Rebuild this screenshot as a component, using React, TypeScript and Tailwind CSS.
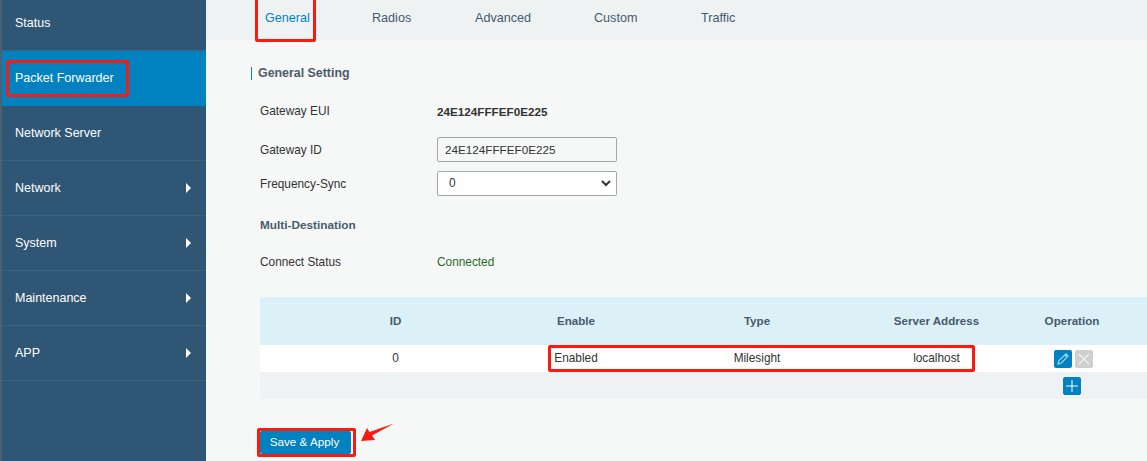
import { Fragment } from 'react';

const navItems = [
  { label: 'Status' },
  { label: 'Packet Forwarder', active: true },
  { label: 'Network Server' },
  { label: 'Network', arrow: true },
  { label: 'System', arrow: true },
  { label: 'Maintenance', arrow: true },
  { label: 'APP', arrow: true },
];

const tabs = [
  { label: 'General', width: 'w-[107px]', active: true },
  { label: 'Radios', width: 'w-[103px]' },
  { label: 'Advanced', width: 'w-[119px]' },
  { label: 'Custom', width: 'w-[107px]' },
  { label: 'Traffic', width: 'w-[71px]' },
];

const columns = ['ID', 'Enable', 'Type', 'Server Address', 'Operation'];
const row = ['0', 'Enabled', 'Milesight', 'localhost'];

function App() {
  return (
    <div className="relative flex h-[461px] w-[1147px] overflow-hidden font-['Liberation_Sans',Arial,sans-serif] text-[11.85px] text-[#333]">
      {/* Sidebar */}
      <aside className="w-[206px] shrink-0 border-l-2 border-[#4b6275] bg-[#2f5674] text-[12.5px]">
        {navItems.map((item) => (
          <div
            key={item.label}
            className={`flex h-[55px] items-center justify-between border-b border-[#3d6380] pl-[13px] pr-[15px] first:-mt-[4px] ${
              item.active ? 'border-b-[#0082c0] bg-[#0082c0]' : ''
            } text-white`}
          >
            <span>{item.label}</span>
            {item.arrow && (
              <span className="h-0 w-0 border-y-[5px] border-l-[5px] border-y-transparent border-l-white" />
            )}
          </div>
        ))}
      </aside>

      <main className="min-w-0 flex-1 bg-[#f6f8f8]">
        {/* Tabs */}
        <div className="flex h-[40px] bg-[#eff2f3] pb-[3px] pl-[59px] text-[12.6px]">
          {tabs.map((tab) => (
            <div
              key={tab.label}
              className={`flex items-center ${tab.width} ${tab.active ? 'text-[#0082c0]' : 'text-[#455a6b]'}`}
            >
              {tab.label}
            </div>
          ))}
        </div>

        {/* General setting */}
        <div className="pl-[54px]">
          <h2 className="-ml-[9px] mt-[27px] flex h-[13px] items-center border-l border-[#0082c0] pl-[6px] text-[12.4px] font-bold text-[#4a5b68]">
            General Setting
          </h2>
          <div className="mt-[23px] flex h-[16px] items-center">
            <span className="w-[177px] pt-[2px]">Gateway EUI</span>
            <span className="pt-[2px] text-[11.7px] font-bold">24E124FFFEF0E225</span>
          </div>
          <div className="mt-[18px] flex h-[25px] items-center">
            <span className="w-[177px] pt-[2px]">Gateway ID</span>
            <input
              readOnly
              value="24E124FFFEF0E225"
              className="h-[25px] w-[180px] rounded-[2px] border border-[#a6a6a6] bg-[#f6f8f8] px-[7px] text-[11.7px] text-[#333]"
            />
          </div>
          <div className="mt-[9px] flex h-[25px] items-center">
            <span className="w-[177px] pt-[2px]">Frequency-Sync</span>
            <div className="relative flex h-[25px] w-[180px] items-center rounded-[2px] border border-[#a6a6a6] bg-white pl-[11px]">
              <span>0</span>
              <svg className="absolute right-[5px] top-[8px]" width="10" height="7" viewBox="0 0 10 7">
                <path d="M1 1 L5 5 L9 1" fill="none" stroke="#333" strokeWidth="2" />
              </svg>
            </div>
          </div>
          <div className="mt-[21px] flex h-[16px] items-center text-[11.8px] font-bold text-[#4a5b68]">
            <span className="pt-[2px]">Multi-Destination</span>
          </div>
          <div className="mt-[21px] flex h-[16px] items-center">
            <span className="w-[177px] pt-[2px]">Connect Status</span>
            <span className="pt-[2px] text-[#1f6b1f]">Connected</span>
          </div>

          {/* Destination table */}
          <div className="mt-[27px] grid w-[904px] grid-cols-[271px_90px_272px_87px_184px] text-center">
            {columns.map((col, i) => (
              <div
                key={col}
                className={`flex h-[48px] items-center justify-center whitespace-nowrap bg-[#dcf0f8] text-[11.6px] font-bold text-[#455a6b] ${
                  i === 0 ? 'rounded-tl-[4px]' : ''
                }`}
              >
                {col}
              </div>
            ))}
            {row.map((cell) => (
              <div key={cell} className="flex h-[27px] items-center justify-center bg-white">
                {cell}
              </div>
            ))}
            <div className="flex h-[27px] items-center justify-center gap-[3px] bg-white pl-[3px]">
              <span className="flex h-[18px] w-[18px] items-center justify-center rounded-[2px] bg-[#0082c0]">
                <svg width="14" height="14" viewBox="0 0 14 14" fill="none" stroke="#a9d9ef" strokeWidth="1.1">
                  <path d="M2 12 L3 8.6 L10 1.8 L12.2 4 L5.4 11 Z M8.8 3 L11 5.2" />
                </svg>
              </span>
              <span className="flex h-[18px] w-[18px] items-center justify-center rounded-[2px] bg-[#cfcfcf]">
                <svg width="12" height="12" viewBox="0 0 12 12" fill="none" stroke="#eeeeee" strokeWidth="1.5">
                  <path d="M1 1 L11 11 M11 1 L1 11" />
                </svg>
              </span>
            </div>
            <div className="col-span-4 h-[27px] bg-[#eef2f3]" />
            <div className="flex h-[27px] items-center justify-center bg-[#eef2f3]">
              <span className="flex h-[18px] w-[18px] items-center justify-center rounded-[2px] bg-[#0082c0]">
                <svg width="12" height="12" viewBox="0 0 12 12" fill="none" stroke="#fff" strokeWidth="1">
                  <path d="M6 0 V12 M0 6 H12" />
                </svg>
              </span>
            </div>
          </div>

          <button className="mt-[32px] block h-[23px] w-[91px] rounded-[2px] bg-[#0082c0] pb-[2px] pr-[2px] text-center text-[11.7px] text-white">
            Save &amp; Apply
          </button>
        </div>
      </main>

      {/* Red annotations drawn over the screenshot */}
      <Fragment>
        <div className="absolute left-[255px] top-[-4px] h-[46px] w-[61px] rounded-[2px] border-[3px] border-[#fb1a10]" />
        <div className="absolute left-[6px] top-[60px] h-[37px] w-[123px] rounded-[2px] border-[3px] border-[#fb1a10]" />
        <div className="absolute left-[548px] top-[345px] h-[27px] w-[427px] rounded-[2px] border-[3px] border-[#fb1a10]" />
        <div className="absolute left-[257px] top-[428px] h-[29px] w-[99px] rounded-[2px] border-[3px] border-[#fb1a10]" />
        <svg className="absolute left-[358px] top-[420px]" width="38" height="24" viewBox="0 0 38 24">
          <path d="M3 21 L9 8 L11.5 12 L36 3.5 L14 15.5 L17 20 Z" fill="#fb1a10" />
        </svg>
      </Fragment>
    </div>
  );
}

export default App;
